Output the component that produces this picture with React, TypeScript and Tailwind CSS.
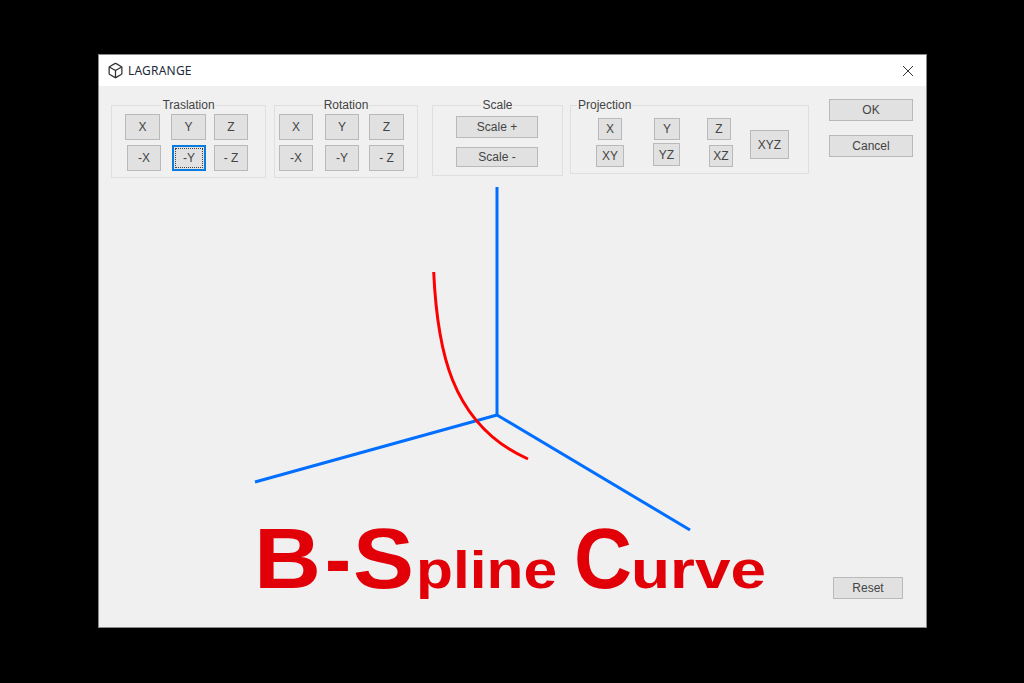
import { Box } from "lucide-react";
import type { ReactNode } from "react";

interface BtnProps {
  label: string;
  className: string;
  focused?: boolean;
}

function Btn({ label, className, focused }: BtnProps) {
  if (focused) {
    return (
      <button className={`flex items-center justify-center bg-[#e1e1e1] border-2 border-[#0a7ce0] p-px ${className}`}>
        <span className="flex w-full h-full items-center justify-center border border-dotted border-[#444]">
          {label}
        </span>
      </button>
    );
  }
  return (
    <button className={`flex items-center justify-center bg-[#e1e1e1] border border-[#b9b9b9] ${className}`}>
      {label}
    </button>
  );
}

function Group({ title, className, legendClass, children }: { title: string; className: string; legendClass: string; children: ReactNode }) {
  return (
    <fieldset className={`border border-[#dfdfdf] ${className}`}>
      <legend className={`leading-4 px-px ${legendClass}`}>{title}</legend>
      {children}
    </fieldset>
  );
}

export default function App() {
  return (
    <div className="min-h-[683px] bg-black pl-[98px] pt-[54px] font-['Liberation_Sans',sans-serif] text-[12px] text-[#444]">
      <div className="flex flex-col w-[829px] h-[574px] border border-[#8a8a8a] bg-[#f0f0f0]">
        {/* Title bar */}
        <div className="flex items-center h-[31px] bg-white pl-[8px] pr-[12px] shrink-0">
          <Box size={17} strokeWidth={1.8} className="text-[#333]" />
          <span className="ml-[4px] font-['Noto_Sans',sans-serif] text-[12px] tracking-[0.2px] text-[#1c2a3a]">LAGRANGE</span>
          <svg className="ml-auto" width="12" height="12" viewBox="0 0 12 12">
            <path d="M1 1 L11 11 M11 1 L1 11" stroke="#333" strokeWidth="1" fill="none" />
          </svg>
        </div>

        {/* Toolbar */}
        <div className="flex items-start h-[92px] shrink-0 pt-[11px] pl-[12px]">
          <Group title="Traslation" className="w-[155px]" legendClass="mx-auto">
            <div className="pl-[13px] pt-px pb-[6px]">
              <div className="flex">
                <Btn label="X" className="w-[35px] h-[26px]" />
                <Btn label="Y" className="w-[35px] h-[26px] ml-[11px]" />
                <Btn label="Z" className="w-[34px] h-[26px] ml-[8px]" />
              </div>
              <div className="flex mt-[5px]">
                <Btn label="-X" className="w-[34px] h-[26px] ml-[2px]" />
                <Btn label="-Y" focused className="w-[34px] h-[26px] ml-[11px]" />
                <Btn label="- Z" className="w-[34px] h-[26px] ml-[8px]" />
              </div>
            </div>
          </Group>

          <Group title="Rotation" className="w-[144px] ml-[8px]" legendClass="mx-auto">
            <div className="pl-[4px] pt-px pb-[6px]">
              <div className="flex">
                <Btn label="X" className="w-[34px] h-[26px]" />
                <Btn label="Y" className="w-[34px] h-[26px] ml-[12px]" />
                <Btn label="Z" className="w-[35px] h-[26px] ml-[10px]" />
              </div>
              <div className="flex mt-[5px]">
                <Btn label="-X" className="w-[34px] h-[26px]" />
                <Btn label="-Y" className="w-[34px] h-[26px] ml-[12px]" />
                <Btn label="- Z" className="w-[35px] h-[26px] ml-[10px]" />
              </div>
            </div>
          </Group>

          <Group title="Scale" className="w-[131px] ml-[14px]" legendClass="mx-auto">
            <div className="pl-[23px] pt-[3px] pb-[8px]">
              <Btn label="Scale +" className="w-[82px] h-[22px]" />
              <Btn label="Scale -" className="w-[82px] h-[20px] mt-[9px]" />
            </div>
          </Group>

          <Group title="Projection" className="w-[239px] ml-[7px]" legendClass="ml-[6px]">
            <div className="flex items-start pl-[25px] pt-[5px] pb-[6px]">
              <div className="flex flex-col items-start w-[28px]">
                <Btn label="X" className="w-[24px] h-[22px] ml-[2px]" />
                <Btn label="XY" className="w-[28px] h-[22px] mt-[5px]" />
              </div>
              <div className="flex flex-col items-start w-[27px] ml-[29px]">
                <Btn label="Y" className="w-[26px] h-[22px] ml-px" />
                <Btn label="YZ" className="w-[27px] h-[23px] mt-[3px]" />
              </div>
              <div className="flex flex-col items-start w-[26px] ml-[27px]">
                <Btn label="Z" className="w-[24px] h-[22px]" />
                <Btn label="XZ" className="w-[24px] h-[22px] mt-[5px] ml-[2px]" />
              </div>
              <Btn label="XYZ" className="w-[39px] h-[29px] mt-[12px] ml-[17px]" />
            </div>
          </Group>

          <div className="flex flex-col ml-[20px] mt-[2px]">
            <Btn label="OK" className="w-[84px] h-[22px]" />
            <Btn label="Cancel" className="w-[84px] h-[22px] mt-[14px]" />
          </div>
        </div>

        {/* Drawing area */}
        <div className="relative flex-1 min-h-0">
          <svg className="block w-full h-full" viewBox="99 178 827 449">
            <g stroke="#006eff" strokeWidth="3" fill="none">
              <path d="M497 187 L497 415" />
              <path d="M497 415 L255 482" />
              <path d="M497 415 L690 530" />
            </g>
            <path d="M433.7 272 C437 345 449 424 528 459" stroke="#ff0000" strokeWidth="3" fill="none" />
            <g className="fill-[#e10008] font-['Liberation_Sans',sans-serif] font-bold">
              <text x="254" y="588" fontSize="86" textLength="67" lengthAdjust="spacingAndGlyphs">B</text>
              <text x="325" y="588" fontSize="86" textLength="26" lengthAdjust="spacingAndGlyphs">-</text>
              <text x="353" y="588" fontSize="86" textLength="61" lengthAdjust="spacingAndGlyphs">S</text>
              <text x="416" y="588" fontSize="51" textLength="141" lengthAdjust="spacingAndGlyphs">pline</text>
              <text x="574" y="588" fontSize="86" textLength="58" lengthAdjust="spacingAndGlyphs">C</text>
              <text x="631" y="588" fontSize="51" textLength="135" lengthAdjust="spacingAndGlyphs">urve</text>
            </g>
          </svg>
          <Btn label="Reset" className="absolute right-[23px] bottom-[28px] w-[70px] h-[22px]" />
        </div>
      </div>
    </div>
  );
}
